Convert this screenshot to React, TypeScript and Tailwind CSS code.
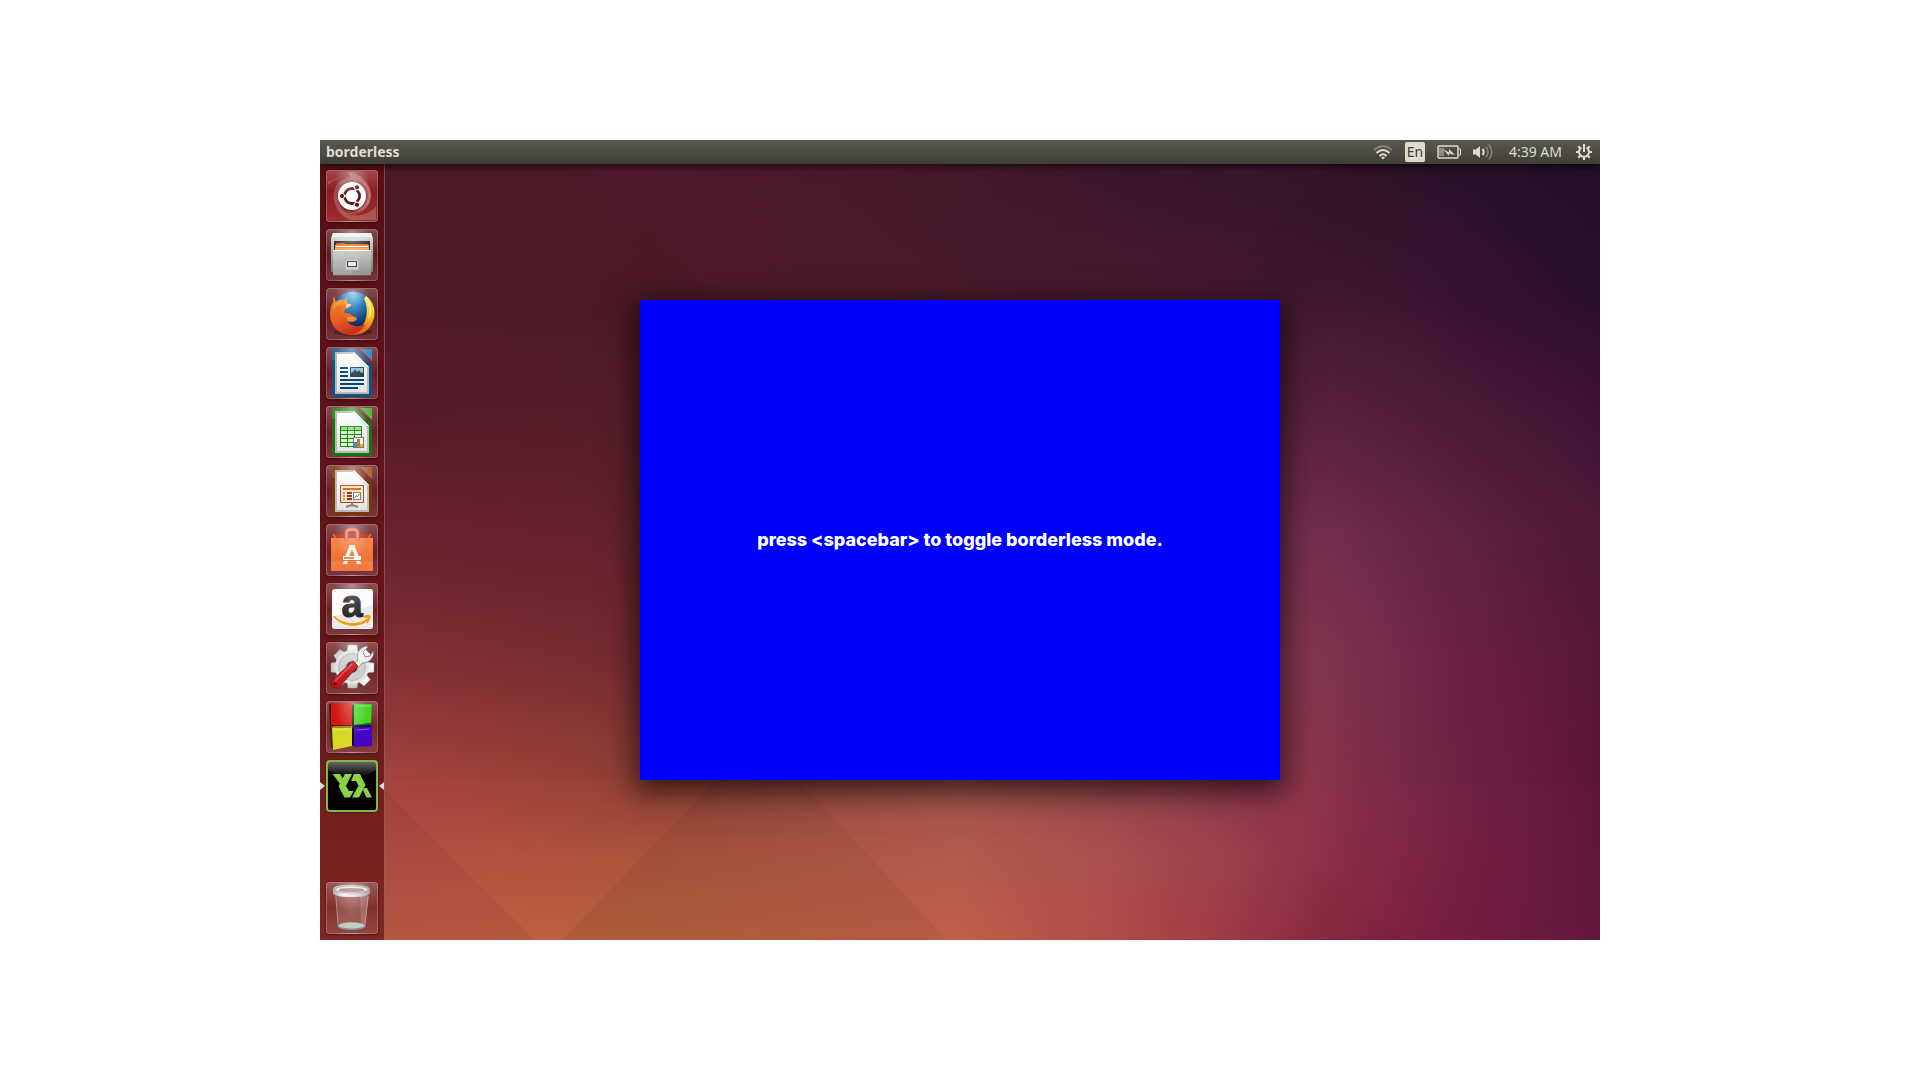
import type { ReactNode } from "react";

// wallpaper colours, one line per row, left to right
const meshStops = [64, 180, 320, 640, 800, 920, 1000, 1080, 1180, 1280];
const meshRows = [
  { y: 24, colors: ["#4c1927", "#4d1928", "#4d1828", "#421728", "#38162a", "#33142c", "#30122a", "#2b1128", "#271027", "#22102a"] },
  { y: 160, colors: ["#501927", "#4e1827", "#4c1826", "#47192a", "#43192c", "#42192f", "#3e182f", "#3b1631", "#32112e", "#2a0f28"] },
  { y: 280, colors: ["#571c2b", "#571d2a", "#551e2a", "#53202e", "#562138", "#5a2140", "#5a2140", "#521e3b", "#481836", "#3e1432"] },
  { y: 400, colors: ["#6b232d", "#68222c", "#64232c", "#682838", "#702c44", "#752f4c", "#722e4c", "#682749", "#5a1f40", "#4f1838"] },
  { y: 520, colors: ["#812f34", "#7c2d32", "#752b30", "#803644", "#86384c", "#863850", "#82354f", "#732a49", "#651d41", "#58183a"] },
  { y: 640, colors: ["#a3443f", "#9d4239", "#8f4036", "#a2534b", "#99474e", "#90394c", "#8a344a", "#782846", "#6a1e40", "#5c153b"] },
  { y: 720, colors: ["#b05042", "#b1513f", "#a9543c", "#b25c4b", "#a84e50", "#9a404a", "#8b3048", "#7c2542", "#6e1c3e", "#5e163b"] },
  { y: 800, colors: ["#bc5b45", "#bd5d44", "#b46140", "#bf5e49", "#b24949", "#9a3844", "#882940", "#7a203f", "#6c1a3d", "#60163c"] },
];

function Wallpaper() {
  return (
    <svg
      className="absolute inset-0 h-full w-full"
      viewBox="0 0 1280 800"
      preserveAspectRatio="none"
      aria-hidden="true"
    >
      <defs>
        {meshRows.map((row, i) => (
          <linearGradient key={row.y} id={`row${i}`} gradientUnits="userSpaceOnUse" x1="64" x2="1280" y1="0" y2="0">
            {row.colors.map((color, j) => (
              <stop key={j} offset={(meshStops[j] - 64) / 1216} stopColor={color} />
            ))}
          </linearGradient>
        ))}
        {meshRows.slice(1).map((row, i) => (
          <g key={row.y}>
            <linearGradient id={`fade${i + 1}`} gradientUnits="userSpaceOnUse" x1="0" x2="0" y1={meshRows[i].y} y2={row.y}>
              <stop offset="0" stopColor="#fff" stopOpacity="0" />
              <stop offset="1" stopColor="#fff" />
            </linearGradient>
            <mask id={`mask${i + 1}`} maskUnits="userSpaceOnUse" x="0" y="0" width="1280" height="800" style={{ maskType: "alpha" }}>
              <rect width="1280" height="800" fill={`url(#fade${i + 1})`} />
            </mask>
          </g>
        ))}
      </defs>
      <rect width="1280" height="800" fill="url(#row0)" />
      {meshRows.slice(1).map((row, i) => (
        <rect key={row.y} width="1280" height="800" fill={`url(#row${i + 1})`} mask={`url(#mask${i + 1})`} />
      ))}
      {/* folded paper facets */}
      <path d="M64 650L215 800H64z" fill="#401c10" opacity=".05" />
      <path d="M242 800L397 640H478L627 800z" fill="#4a3010" opacity=".07" />
      <path d="M64 640H397L242 800H215L64 650z" fill="#ff7040" opacity=".03" />
      <path d="M891 645L1085 800H1280V645z" fill="#ff60a0" opacity=".025" />
      <path d="M268 24L395 160H880L1014 24z" fill="#ff70b0" opacity=".02" />
      <path d="M1100 24L1280 200V400H640V160H880L1014 24z" fill="#ff60c0" opacity=".01" />
    </svg>
  );
}

function HomeIcon() {
  return (
    <>
      <rect width="52" height="52" rx="4" fill="url(#homeBg)" />
      <path d="M2 12C16 4 42 4 45 24C46 38 30 45 20 39C10 32 12 20 20 15C12 22 10 34 18 41C30 50 44 44 50 36V50H24C10 44 4 28 10 16C14 9 22 7 28 8C18 6 8 8 2 15z" fill="#fff" opacity=".2" />
      <path d="M22 2C38 4 50 18 43 34C38 44 24 46 16 42C32 46 42 36 42 25C40 12 32 8 24 7z" fill="#fff" opacity=".22" />
      <circle cx="26" cy="26.500" r="14.500" fill="#3a0505" opacity=".35" />
      <circle cx="26" cy="26" r="14" fill="#fff" />
      <circle cx="26" cy="26" r="7.500" fill="none" stroke="#54141c" strokeWidth="3" />
      <path d="M26 26L15 26M26 26L31.500 16.500M26 26L31.500 35.500" stroke="#fff" strokeWidth="1.500" />
      <circle cx="26" cy="26" r="6" fill="#fff" />
      <g fill="#54141c" stroke="#fff" strokeWidth="1">
        <circle cx="16" cy="26" r="2.600" />
        <circle cx="31" cy="17.300" r="2.600" />
        <circle cx="31" cy="34.700" r="2.600" />
      </g>
    </>
  );
}

function FilesIcon() {
  return (
    <>
      <path d="M7 4H45L47 9V43H5V9z" fill="url(#steel)" />
      <path d="M7 4H45L46 8H6z" fill="#f0f0f0" />
      <rect x="8" y="12" width="36" height="10" fill="#3b3a38" />
      <path d="M10 14H18L20 15H42V22H10z" fill="#d9603a" />
      <path d="M9 16H43V22H9z" fill="#f08a3c" />
      <path d="M10 17H42V18H10z" fill="#fff" />
      <path d="M9 19H43V22H9z" fill="#f4ab5c" />
      <path d="M7 21H45V47H7z" fill="url(#steelDark)" />
      <path d="M7 21H16L28 47H7z" fill="#fff" opacity=".12" />
      <path d="M7 21H45V22H7z" fill="#fff" />
      <path d="M7 46H45V47H7z" fill="#5c5c5c" />
      <rect x="19" y="30" width="14" height="11" rx="2" fill="#cfcfcf" stroke="#b0b0b0" />
      <rect x="21.500" y="32.500" width="9" height="5" fill="#e8e8e8" stroke="#454545" />
    </>
  );
}

function FirefoxIcon() {
  return (
    <>
      <ellipse cx="27" cy="44" rx="19" ry="4" fill="#000" opacity=".3" />
      <circle cx="27" cy="25" r="21.500" fill="url(#globe)" />
      <path d="M40 8C47 13 50 22 48 30C46 38 40 47 28 47C20 48 18 44 18 40C26 44 36 41 39 33C42 26 41 16 38 11z" fill="url(#flame)" />
      <path d="M40 8C41 14 46 22 42 31C48 26 45 15 40 8z" fill="#fff08a" />
      <path d="M8 8L10 14C12 12 15 11 18 12C20 9 22 8 21 9C20 12 21 15 23 16L25 17C25 20 22 20 20 21C18 22 19 24 18 25C21 24 24 25 27 28C29 29 31 29 31 31C29 35 24 34 21 33C24 38 32 40 39 36C37 42 30 47 23 47C11 46 4 37 4 26C4 21 5 17 7 14C7 12 7 10 8 8z" fill="url(#fox)" />
      <path d="M10 14C12 12 15 11 18 12C20 9 22 8 21 9C20 12 21 15 23 16C18 17 12 15 7 22C7 18 8 16 10 14z" fill="#f9a13a" opacity=".7" />
      <path d="M20 16L25 16C25 19 22 19 20 20z" fill="#f6d0b0" />
      <path d="M21 33C25 34 29 34 31 31C28 28 24 29 21 29z" fill="#fbb040" opacity=".6" />
    </>
  );
}

function DocumentBase({ dark, light }: { dark: string; light: string }) {
  return (
    <>
      <path d="M6 3Q6 2 7 2H29L46 19V49Q46 50 45 50H7Q6 50 6 49z" fill={dark} />
      <path d="M34 2H45Q46 2 46 3V14z" fill={light} />
      <path d="M6 3Q6 2 7 2H29L40 13H6z" fill={light} opacity=".45" />
      <path d="M9 5H28L43 20V47H9z" fill="#b9b9b9" />
      <path d="M11 7H27L41 21V45H11z" fill="url(#paper)" />
      <path d="M28 5L43 20H41L27 7z" fill="#fff" />
    </>
  );
}

function WriterIcon() {
  return (
    <>
      <DocumentBase dark="#0d5480" light="#3f8fc4" />
      <path d="M14 21H22M14 25H22M14 29H22M14 33H38M14 37H38M14 41H32" stroke="#06477a" strokeWidth="2" />
      <rect x="24.500" y="20.500" width="13" height="9" fill="#7cc4ee" stroke="#06477a" />
      <path d="M34 21H37V24z" fill="#f4c430" />
      <path d="M25 29V26L28 24L29 22L31 25L33 23L34 25L37 26V29z" fill="#3b3b3b" />
    </>
  );
}

function CalcIcon() {
  return (
    <>
      <DocumentBase dark="#17720f" light="#55bb45" />
      <rect x="14" y="20" width="22" height="21" fill="#128a0c" />
      {[21, 25, 29, 33, 37].map((y) => (
        <path key={y} d={`M15 ${y}h6v3h-6zM22 ${y}h6v3h-6zM29 ${y}h6v3h-6z`} fill={y === 21 ? "#8fe07a" : "#d9f7d0"} />
      ))}
      <rect x="27.500" y="31.500" width="10" height="10" fill="#fff" stroke="#777" />
      <path d="M28 36H31V41H28z" fill="#1c9be8" />
      <path d="M31 33H34V41H31z" fill="#e06a20" />
      <path d="M34 38H37V41H34z" fill="#f2b50c" />
    </>
  );
}

function ImpressIcon() {
  return (
    <>
      <DocumentBase dark="#7a3606" light="#b8693a" />
      <path d="M26 38V40L20 42M26 40L32 42" stroke="#808080" strokeWidth="2" fill="none" />
      <rect x="14.500" y="20.500" width="23" height="17" fill="#fbe3d3" stroke="#b54a0e" />
      <path d="M17 24H35" stroke="#d9601a" strokeWidth="2" />
      <path d="M17 28H19M17 31H19M17 34H19" stroke="#e88a55" strokeWidth="2" />
      <path d="M21 28H26M21 31H26M21 34H26" stroke="#84300a" strokeWidth="2" />
      <rect x="27.500" y="27.500" width="7" height="7" fill="#fff" stroke="#808080" />
      <path d="M28.500 33L30.500 30.500L31.500 31.500L34 28.500" stroke="#2ca02c" fill="none" />
    </>
  );
}

function SoftwareIcon() {
  return (
    <>
      <path d="M5 14L8 10H44L47 14z" fill="#b8391a" />
      <path d="M7 10L10 14M45 10L42 14" stroke="#e5683c" strokeWidth="2" />
      <path d="M5 14H47V47H5z" fill="url(#bag)" />
      <path d="M5 37H47V47H5z" fill="#fff" opacity=".1" />
      <path d="M20.500 17V8.500Q20.500 5.500 23.500 5.500H28.500Q31.500 5.500 31.500 8.500V17" fill="none" stroke="#d9542e" strokeWidth="4" />
      <path d="M20.500 17V8.500Q20.500 5.500 23.500 5.500H28.500Q31.500 5.500 31.500 8.500V17" fill="none" stroke="#f58a66" strokeWidth="2" />
      <path d="M25 23L20 35M27 23L32 35" stroke="#fff" strokeWidth="3.500" />
      <path d="M23 22H29" stroke="#fff" strokeWidth="1.500" />
      <rect x="17" y="32" width="18" height="4" rx="1" fill="#fff" />
      <path d="M18 34H28" stroke="#e8641f" strokeWidth="1.500" />
      <path d="M17 40L18 37H22L21 40zM35 40L34 37H30L31 40z" fill="#fff" />
    </>
  );
}

function AmazonIcon() {
  return (
    <>
      <rect x="6" y="6" width="41" height="40" rx="3" fill="#fcfcfc" />
      <path d="M6 34L47 22V43Q47 46 44 46H9Q6 46 6 43z" fill="#dedede" opacity=".6" />
      <text x="26" y="34" textAnchor="middle" className="fill-[#262626] stroke-[#262626] font-['Liberation_Sans',sans-serif] text-[38px] font-bold">
        a
      </text>
      <path d="M8 33C17 42 32 43 41 36L42 37C33 45 17 44 8 34z" fill="#ff9900" stroke="#ff9900" />
      <path d="M37 34C40 32 43 32 44 33C44 35 43 38 41 40C42 37 43 35 41 34.500C40 34 38 34.500 37 34z" fill="#ff9900" stroke="#ff9900" />
    </>
  );
}

function SettingsIcon() {
  return (
    <>
      <g fill="url(#gear)" stroke="#9a9a9a" strokeWidth=".6">
        {[0, 45, 90, 135].map((angle) => (
          <path key={angle} d="M22 3H31L32 10V40L31 46H22L21 40V10z" transform={`rotate(${angle} 26 25)`} />
        ))}
      </g>
      <circle cx="26" cy="25" r="17" fill="#e4e4e4" />
      <circle cx="26" cy="25" r="13.500" fill="#cfcfcf" stroke="#b4b4b4" />
      <circle cx="26" cy="25" r="6" fill="#5c1a1f" stroke="#a0a0a0" />
      <path d="M28 22L32 18C30 11 34 5 41 4L42 5L37 10L39 15L44 14L47 9C49 15 44 21 36 21L32 26z" fill="#f2f2f2" stroke="#777" strokeWidth=".8" />
      <path d="M27 19L32 24L14 44C11 48 4 46 5 40C6 38 8 37 10 35z" fill="#c8141c" stroke="#7c0b10" strokeWidth=".8" />
      <path d="M26 22L9 39" stroke="#f0564e" strokeWidth="1.500" />
      <circle cx="9" cy="42" r="1.800" fill="#5a0a0c" />
    </>
  );
}

function BlocksIcon() {
  return (
    <>
      <path d="M3 3L6 2V25L4 24z" fill="#300" />
      <path d="M5 2H26V25H5z" fill="#d4150e" />
      <path d="M5 24H25L23 27H4z" fill="#6d0806" />
      <path d="M26 4L29 3V24L26 25z" fill="#0a2c08" />
      <path d="M28 3H46L45 22L28 24z" fill="#41d51d" />
      <path d="M28 24L45 22L43 25H27z" fill="#156a08" />
      <path d="M4 27L7 26V49L5 46z" fill="#2c2c02" />
      <path d="M6 27L26 25V45L7 49z" fill="#d6d824" />
      <path d="M5 26L8 25H26L25 27H6z" fill="#8e8f0e" />
      <path d="M26 26L29 27V46L26 44z" fill="#0b0030" />
      <path d="M28 27L46 25V45L28 46z" fill="#4505c4" />
      <path d="M26 25L30 24H44L46 26L28 27z" fill="#24036c" />
      <path d="M8 29L23 28M31 29L43 28M31 5H44" stroke="#fff" opacity=".35" />
    </>
  );
}

function GameMakerIcon() {
  return (
    <>
      <rect x="1" y="1" width="50" height="50" rx="3" fill="#000" stroke="#7db83f" strokeWidth="2" />
      <g fill="#8bd14a">
        <path d="M6.500 14H14L17.500 19.500L14.500 24.500z" />
        <path d="M19 14H26L20 26L23 31H27.500L24 37.500H18.500L12.500 26z" />
        <path d="M28 14H34L39.500 25L33 37.500H26L32.500 25.500L30 21H25z" />
        <path d="M37 30L38.500 28H41L46 37.500H40.500z" />
      </g>
      <path d="M2 2H50V10Q26 24 2 10z" fill="url(#gloss)" />
    </>
  );
}

function TrashIcon() {
  return (
    <>
      <path d="M9 12H43L39 45Q26 50 12 45z" fill="#fff" opacity=".16" />
      <path d="M34 14H43L39 45L35 46z" fill="#fff" opacity=".14" />
      <path d="M10 15L12 44M42 15L39 44" stroke="#fff" opacity=".3" />
      <ellipse cx="25.500" cy="44" rx="14" ry="4" fill="#8f8f8f" />
      <ellipse cx="25.500" cy="43.500" rx="13" ry="3" fill="#c4cac8" />
      <path d="M7 7Q7 3 26 3Q44 3 44 7V11Q43 15 26 15Q8 15 7 11z" fill="url(#rim)" />
      <ellipse cx="25.500" cy="7.500" rx="16.500" ry="3.500" fill="#f0f0f0" stroke="#a5a5a5" />
      <ellipse cx="25.500" cy="8" rx="13" ry="2" fill="#b08082" />
    </>
  );
}

const launcherItems: { name: string; icon: ReactNode; active?: boolean; pinned?: boolean }[] = [
  { name: "Search your computer", icon: <HomeIcon /> },
  { name: "Files", icon: <FilesIcon /> },
  { name: "Firefox", icon: <FirefoxIcon /> },
  { name: "Writer", icon: <WriterIcon /> },
  { name: "Calc", icon: <CalcIcon /> },
  { name: "Impress", icon: <ImpressIcon /> },
  { name: "Software Center", icon: <SoftwareIcon /> },
  { name: "Amazon", icon: <AmazonIcon /> },
  { name: "System Settings", icon: <SettingsIcon /> },
  { name: "Blocks", icon: <BlocksIcon /> },
  { name: "Borderless", icon: <GameMakerIcon />, active: true },
  { name: "Trash", icon: <TrashIcon />, pinned: true },
];

function IconGradients() {
  return (
    <svg className="absolute h-0 w-0" aria-hidden="true">
      <defs>
        <linearGradient id="homeBg" x2="0" y2="1">
          <stop offset="0" stopColor="#a5484a" />
          <stop offset=".4" stopColor="#8a1d20" />
          <stop offset="1" stopColor="#9c3030" />
        </linearGradient>
        <linearGradient id="steel" x2="0" y2="1">
          <stop offset="0" stopColor="#e6e6e6" />
          <stop offset="1" stopColor="#777" />
        </linearGradient>
        <linearGradient id="steelDark" x2="0" y2="1">
          <stop offset="0" stopColor="#c8c8c8" />
          <stop offset="1" stopColor="#929292" />
        </linearGradient>
        <radialGradient id="globe" cx=".5" cy=".05" r=".8">
          <stop offset="0" stopColor="#7cc4ec" />
          <stop offset=".4" stopColor="#1d74b4" />
          <stop offset="1" stopColor="#08245a" />
        </radialGradient>
        <linearGradient id="flame" x2="0" y2="1">
          <stop offset="0" stopColor="#fff27a" />
          <stop offset=".5" stopColor="#fcc31c" />
          <stop offset="1" stopColor="#e2501b" />
        </linearGradient>
        <linearGradient id="fox" x2=".4" y2="1">
          <stop offset="0" stopColor="#f08a2c" />
          <stop offset=".6" stopColor="#e8601f" />
          <stop offset="1" stopColor="#c8331a" />
        </linearGradient>
        <linearGradient id="paper" x2="0" y2="1">
          <stop offset="0" stopColor="#fff" />
          <stop offset="1" stopColor="#e4e4e4" />
        </linearGradient>
        <linearGradient id="bag" x2="0" y2="1">
          <stop offset="0" stopColor="#f5854d" />
          <stop offset="1" stopColor="#ef6a26" />
        </linearGradient>
        <linearGradient id="gear" x2="0" y2="1">
          <stop offset="0" stopColor="#f4f4f4" />
          <stop offset="1" stopColor="#cfcfcf" />
        </linearGradient>
        <linearGradient id="gloss" x2="0" y2="1">
          <stop offset="0" stopColor="#fff" stopOpacity=".4" />
          <stop offset="1" stopColor="#fff" stopOpacity="0" />
        </linearGradient>
        <linearGradient id="rim" x2="1" y2="0">
          <stop offset="0" stopColor="#b0b0b0" />
          <stop offset=".3" stopColor="#f4f4f4" />
          <stop offset=".7" stopColor="#d0d0d0" />
          <stop offset="1" stopColor="#a0a0a0" />
        </linearGradient>
      </defs>
    </svg>
  );
}

function Launcher() {
  return (
    <nav
      aria-label="Launcher"
      className="relative flex w-[65px] flex-col border-r border-white/25 bg-linear-to-b from-[#570f16] via-[#66151a] via-60% to-[#7f2723]"
    >
      <ul className="flex flex-1 flex-col gap-[7px] py-1.5">
        {launcherItems.map((item) => (
          <li key={item.name} className={`relative flex justify-center ${item.pinned ? "mt-auto" : ""}`}>
            <button
              type="button"
              aria-label={item.name}
              className="relative size-[52px] rounded bg-linear-to-b from-white/25 via-white/5 to-white/15 shadow-[0_1px_3px_rgba(0,0,0,0.4)]"
            >
              <svg viewBox="0 0 52 52" className="size-full overflow-visible" aria-hidden="true">
                {item.icon}
              </svg>
              {!item.active && (
                <span className="absolute inset-0 rounded border border-white/20 bg-[radial-gradient(ellipse_at_50%_0%,rgba(255,255,255,0.35),transparent_50%)]" />
              )}
            </button>
            {item.active && (
              <>
                <svg viewBox="0 0 5 8" className="absolute top-[22px] left-0 h-2 w-[5px] fill-[#dcdcdc]" aria-hidden="true">
                  <path d="M0 0L5 4L0 8z" />
                </svg>
                <svg viewBox="0 0 5 8" className="absolute top-[22px] right-0 h-2 w-[5px] fill-[#dcdcdc]" aria-hidden="true">
                  <path d="M5 0L0 4L5 8z" />
                </svg>
              </>
            )}
          </li>
        ))}
      </ul>
    </nav>
  );
}

function TopPanel() {
  return (
    <header className="relative z-10 flex h-6 items-center justify-between bg-linear-to-b from-[#5a594f] to-[#3e3d38] pr-2 pl-1.5 font-['Noto_Sans',sans-serif] text-[#dfdbd2] shadow-[0_2px_7px_rgba(0,0,0,0.75)]">
      <h1 className="text-sm font-bold">borderless</h1>
      <div className="flex items-center gap-3">
        <button type="button" aria-label="Network">
          <svg viewBox="0 0 20 16" className="h-4 w-5 fill-none stroke-current stroke-2" aria-hidden="true">
            <path d="M1 6Q10-2 19 6" opacity=".35" />
            <path d="M3.500 9Q10 3 16.500 9M6.500 12Q10 8.500 13.500 12" />
            <path d="M8 13.500L10 15.500L12 13.500Q10 12 8 13.500z" className="fill-current stroke-none" />
          </svg>
        </button>
        <button type="button" className="size-5 rounded-xs bg-[#dfdbd2] text-sm leading-5 text-[#3c3b37]">
          En
        </button>
        <button type="button" aria-label="Battery">
          <svg viewBox="0 0 24 14" className="h-3.5 w-6" aria-hidden="true">
            <rect x="1" y="1" width="20" height="12" rx="1" fill="none" stroke="currentColor" strokeWidth="1.500" />
            <path d="M21.500 4H23.500V10H21.500" fill="none" stroke="currentColor" />
            <rect x="2" y="3" width="5" height="8" fill="currentColor" opacity=".45" />
            <path d="M6 4L12 7.500V4L18 10L12 8.500V11z" fill="currentColor" />
          </svg>
        </button>
        <button type="button" aria-label="Sound">
          <svg viewBox="0 0 20 16" className="h-4 w-5 fill-none stroke-current" aria-hidden="true">
            <path d="M0 5.500H3L7 2V14L3 10.500H0z" className="fill-current stroke-none" />
            <path d="M9.500 5Q12 8 9.500 11" strokeWidth="2" />
            <path d="M13 3Q17 8 13 13M16 .500Q21.500 8 16 15.500" strokeWidth="1.500" opacity=".4" />
          </svg>
        </button>
        <time className="pr-0.5 pl-1 text-sm">4:39 AM</time>
        <button type="button" aria-label="Session">
          <svg viewBox="0 0 16 16" className="size-4 fill-none stroke-current stroke-2" aria-hidden="true">
            <path d="M5.500 3.500A5 5 0 1 0 10.500 3.500M8 0V8" />
            <path d="M0 8H3M13 8H16M8 13V16M2.300 2.300L4.500 4.500M13.700 2.300L11.500 4.500M2.300 13.700L4.500 11.500M13.700 13.700L11.500 11.500" />
          </svg>
        </button>
      </div>
    </header>
  );
}

export default function App() {
  return (
    <div className="flex min-h-screen items-center justify-center bg-white">
      <IconGradients />
      <div className="relative flex aspect-[8/5] w-2/3 flex-col overflow-hidden">
        <Wallpaper />
        <TopPanel />
        <div className="flex flex-1">
          <Launcher />
        </div>
        <main className="absolute inset-0 flex items-center justify-center">
          <section className="flex aspect-[4/3] w-1/2 items-center justify-center bg-[#0000ff] shadow-[0_8px_28px_4px_rgba(0,0,0,0.65)]">
            <p className="font-['Inter',sans-serif] text-lg font-extrabold text-white">
              press &lt;spacebar&gt; to toggle borderless mode.
            </p>
          </section>
        </main>
      </div>
    </div>
  );
}
